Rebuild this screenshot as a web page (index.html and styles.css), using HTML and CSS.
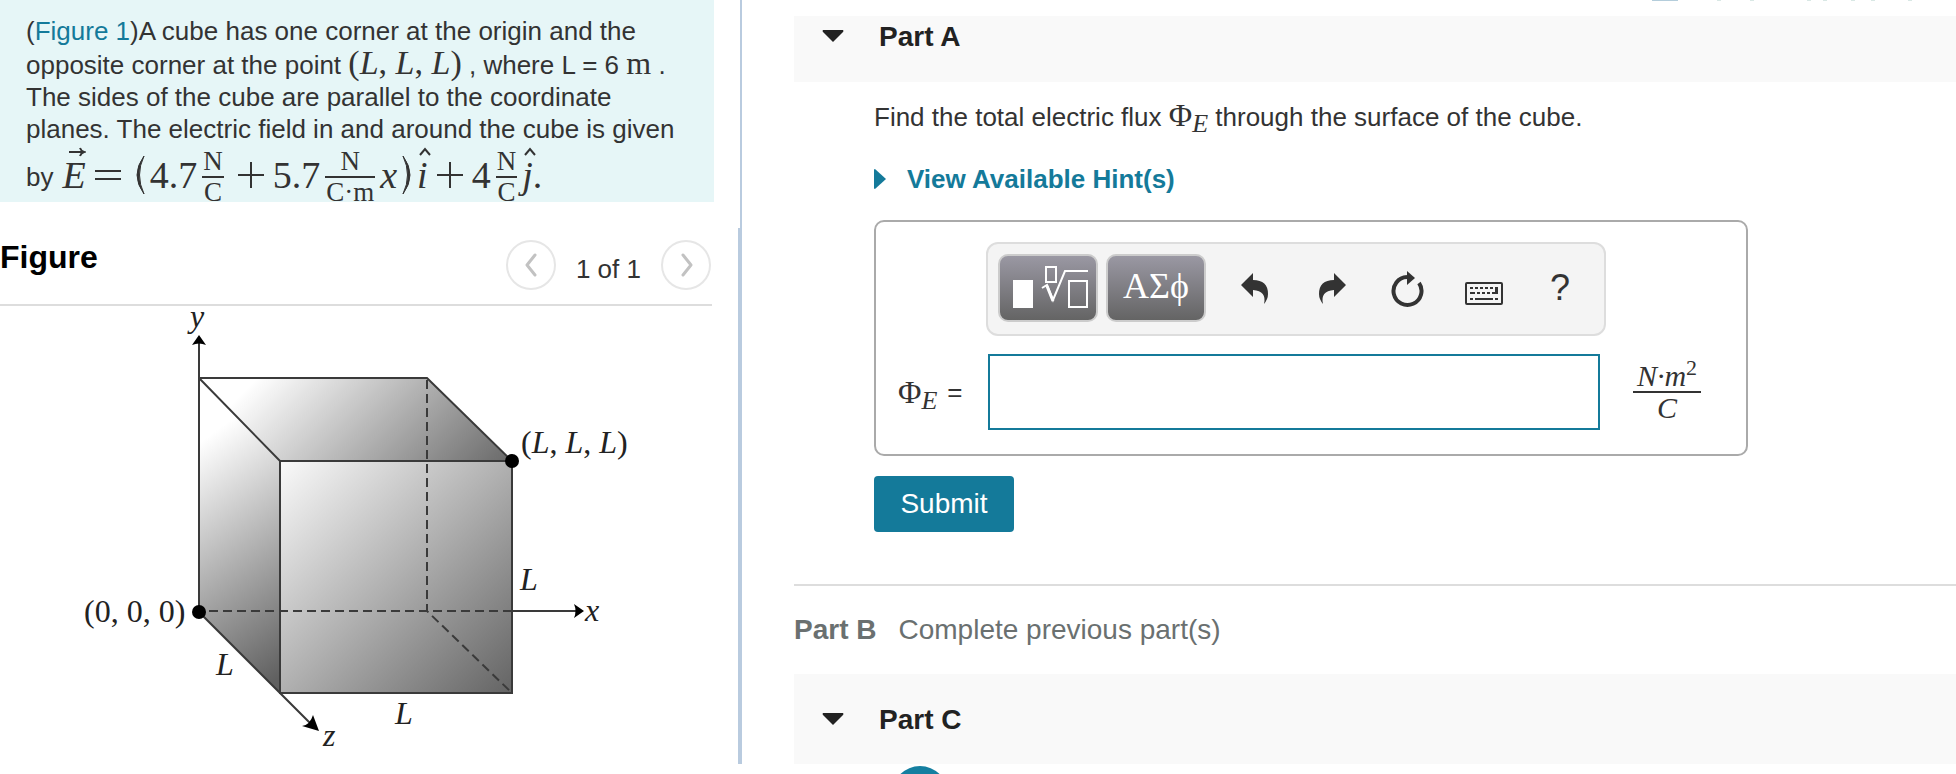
FILE: index.html
```html
<!DOCTYPE html>
<html lang="en">
<head>
<meta charset="utf-8">
<title>Electric flux through a cube</title>
<link rel="stylesheet" href="styles.css">
</head>
<body>
<main class="page">
  <section class="side">
    <p class="problem">
      (<a href="#figure">Figure 1</a>)A cube has one corner at the origin and the<br>
      opposite corner at the point <span class="math point">(<i>L</i>, <i>L</i>, <i>L</i>)</span> , where L = 6 <span class="math unit-m">m</span> .<br>
      The sides of the cube are parallel to the coordinate<br>
      planes. The electric field in and around the cube is given<br>
      <span class="equation"><span class="by">by</span>
        <span class="math"><span class="accented"><i>E</i><svg class="accent" viewBox="0 0 18 10" width="18" height="10"><path d="M1 5H16M12 1q1 3 4 4q-3 1-4 4" fill="none" stroke="currentColor" stroke-width="2"/></svg></span></span>
        <svg class="op" viewBox="0 0 26 26" width="26" height="26"><path d="M0 9H26M0 17H26" stroke="currentColor" stroke-width="2"/></svg>
        <svg class="paren" viewBox="0 0 10 40" width="10" height="40"><path d="M9 1Q-5 20 9 39Q0 20 9 1z" fill="currentColor" stroke="currentColor"/></svg>
        <span class="math">4.7</span>
        <span class="frac"><span>N</span><span>C</span></span>
        <svg class="op" viewBox="0 0 26 26" width="26" height="26"><path d="M0 13H26M13 0V26" stroke="currentColor" stroke-width="2"/></svg>
        <span class="math">5.7</span>
        <span class="frac"><span>N</span><span>C·m</span></span>
        <span class="math"><i>x</i></span>
        <svg class="paren" viewBox="0 0 10 40" width="10" height="40"><path d="M1 1Q15 20 1 39Q10 20 1 1z" fill="currentColor" stroke="currentColor"/></svg>
        <span class="math"><span class="accented"><i>i</i><svg class="accent" viewBox="0 0 18 10" width="18" height="10"><path d="M4 8L9 2L14 8" fill="none" stroke="currentColor" stroke-width="2"/></svg></span></span>
        <svg class="op" viewBox="0 0 26 26" width="26" height="26"><path d="M0 13H26M13 0V26" stroke="currentColor" stroke-width="2"/></svg>
        <span class="math">4</span>
        <span class="frac"><span>N</span><span>C</span></span>
        <span class="math"><span class="accented"><i>j</i><svg class="accent" viewBox="0 0 18 10" width="18" height="10"><path d="M4 8L9 2L14 8" fill="none" stroke="currentColor" stroke-width="2"/></svg></span>.</span>
      </span>
    </p>
    <div class="figure-area">
      <header class="figure-head">
        <h2>Figure</h2>
        <nav class="pager" aria-label="Figures">
          <button type="button" aria-label="Previous figure"><svg viewBox="0 0 50 50" width="50" height="50"><path d="M29 15L21 25L29 35" fill="none" stroke="#c2c2c2" stroke-width="3" stroke-linecap="round" stroke-linejoin="round"/></svg></button>
          <span>1 of 1</span>
          <button type="button" aria-label="Next figure"><svg viewBox="0 0 50 50" width="50" height="50"><path d="M22 15L30 25L22 35" fill="none" stroke="#c2c2c2" stroke-width="3" stroke-linecap="round" stroke-linejoin="round"/></svg></button>
        </nav>
      </header>
      <svg class="cube" id="figure" viewBox="0 306 712 458" role="img" aria-label="Cube with one corner at the origin">
        <defs>
          <linearGradient id="top" gradientUnits="userSpaceOnUse" x1="270" y1="365" x2="440" y2="535"><stop offset="0" stop-color="#fff"/><stop offset="1" stop-color="#686868"/></linearGradient>
          <linearGradient id="left" gradientUnits="userSpaceOnUse" x1="190" y1="450" x2="330" y2="640"><stop offset="0" stop-color="#fff"/><stop offset="1" stop-color="#606060"/></linearGradient>
          <linearGradient id="front" gradientUnits="userSpaceOnUse" x1="280" y1="461" x2="512" y2="693"><stop offset="0" stop-color="#fafafa"/><stop offset=".5" stop-color="#b0b0b0"/><stop offset="1" stop-color="#646464"/></linearGradient>
        </defs>
        <path d="M199 378H427L512 461H280z" fill="url(#top)"/>
        <path d="M199 378L280 461V693L199 612z" fill="url(#left)"/>
        <path d="M280 461H512V693H280z" fill="url(#front)"/>
        <g fill="none" stroke="#3a3a3a" stroke-width="2">
          <path d="M199 342V612L312 725M199 378H427L512 461M199 378L280 461H512V693H280V461M512 611H576"/>
          <path d="M427 380V611L512 693M209 611H512" stroke-dasharray="9 5"/>
        </g>
        <g>
          <path d="M199 335L206 345Q199 342 192 345z"/>
          <path d="M584 611L574 604Q577 611 574 618z"/>
          <path d="M319 731L302 726Q310 725 313 715z"/>
          <circle cx="199" cy="612" r="7"/><circle cx="512" cy="461" r="7"/>
        </g>
        <g class="labels">
          <text x="190" y="327" class="it">y</text>
          <text x="84" y="622">(0, 0, 0)</text>
          <text x="521" y="453">(<tspan class="it">L</tspan>, <tspan class="it">L</tspan>, <tspan class="it">L</tspan>)</text>
          <text x="520" y="590" class="it">L</text>
          <text x="216" y="675" class="it">L</text>
          <text x="395" y="724" class="it">L</text>
          <text x="585" y="621" class="it">x</text>
          <text x="323" y="746" class="it">z</text>
        </g>
      </svg>
    </div>
  </section>

  <section class="parts">
    <div class="cutoff"><svg viewBox="0 0 304 1" width="304" height="1"><path d="M0 0h26v1H0z" fill="#b4cddb"/><path d="M65 0h4v1h-4zM98 0h4v1h-4zM155 0h4v1h-4zM171 0h4v1h-4zM199 0h4v1h-4zM219 0h4v1h-4zM256 0h4v1h-4z" fill="#d9e8e5"/></svg></div>
    <header class="part-head part-a">
      <svg viewBox="0 0 22 12" width="22" height="12"><path d="M1 0H21Q22 1 21 2L11 12L1 2Q0 1 1 0z" fill="#222"/></svg>
      <h2>Part A</h2>
    </header>
    <div class="part-body">
      <p class="question">Find the total electric flux <span class="phi">Φ<sub>E</sub></span> through the surface of the cube.</p>
      <a class="hints" href="#hints"><svg viewBox="0 0 12 20" width="12" height="20"><path d="M0 1Q0 0 1 0L12 10L1 20Q0 20 0 19z" fill="#147a9a"/></svg>View Available Hint(s)</a>
      <form class="answer" id="answer">
        <div class="toolbar">
          <button type="button" class="pad" aria-label="Templates"><svg viewBox="0 0 96 64" width="96" height="64"><path d="M13 24h20v28H13z" fill="#fff"/><path d="M46 11h10v15H46zM69 25h18v26H69z" fill="none" stroke="#fff" stroke-width="2"/><path d="M42 32l5-3l6 15L65 15H88" fill="none" stroke="#fff" stroke-width="2"/><path d="M47 30l6 15" stroke="#fff" stroke-width="3"/></svg></button>
          <button type="button" class="pad">ΑΣϕ</button>
          <button type="button" class="tool" aria-label="Undo"><svg viewBox="0 0 40 40" width="40" height="40"><path d="M5 17L17 5V12Q32 12 32 26Q32 31 28 36Q31 23 17 22V29z" fill="#333"/></svg></button>
          <button type="button" class="tool" aria-label="Redo"><svg viewBox="0 0 40 40" width="40" height="40"><path d="M34 17L22 5V12Q7 12 7 26Q7 31 11 36Q8 23 22 22V29z" fill="#333"/></svg></button>
          <button type="button" class="tool" aria-label="Reset"><svg viewBox="0 0 40 40" width="40" height="40"><path d="M31 15A14 14 0 1 1 19 9" fill="none" stroke="#333" stroke-width="4"/><path d="M19 3L27 10L19 17z" fill="#333"/></svg></button>
          <button type="button" class="tool" aria-label="Keyboard"><svg viewBox="0 0 40 40" width="40" height="40"><rect x="2" y="15" width="36" height="21" rx="1" fill="none" stroke="#333" stroke-width="2"/><g fill="#333"><path d="M6 19h3v2H6zM11 19h3v2h-3zM16 19h3v2h-3zM21 19h3v2h-3zM26 19h3v2h-3z"/><path d="M6 24h5v2H6zM13 24h3v2h-3zM18 24h3v2h-3zM23 24h3v2h-3zM28 24h3v-5h3v7h-6z"/><path d="M6 30h3v2H6zM11 30h18v2H11zM31 30h3v2h-3z"/></g></svg></button>
          <button type="button" class="tool help" aria-label="Help">?</button>
        </div>
        <label class="flux-label" for="flux"><span class="phi">Φ<sub>E</sub></span><span>=</span></label>
        <input id="flux" type="text" autocomplete="off">
        <span class="flux-unit"><span>N·m<sup>2</sup></span><span>C</span></span>
      </form>
      <button class="submit" type="submit" form="answer">Submit</button>
    </div>
    <div class="part-b"><b>Part B</b><span>Complete previous part(s)</span></div>
    <header class="part-head part-c">
      <svg viewBox="0 0 22 12" width="22" height="12"><path d="M1 0H21Q22 1 21 2L11 12L1 2Q0 1 1 0z" fill="#222"/></svg>
      <h2>Part C</h2>
    </header>
    <div class="part-c-body"><div class="dot"></div></div>
  </section>
</main>
</body>
</html>
```

FILE: styles.css
```css
* { box-sizing: border-box; }
body {
  margin: 0;
  background: #fff;
  color: #333;
  font: 26px/32px "Liberation Sans", Arial, sans-serif;
}
h2, p { margin: 0; }
a { color: #147a9a; text-decoration: none; }
button { font: inherit; padding: 0; cursor: pointer; }
svg { display: block; flex: none; }

.page { display: grid; grid-template-columns: 742fr 1214fr; align-items: start; }

/* Left column */
.side { border-right: 2px solid #b9cbdf; }
.problem {
  height: 202px;
  margin-right: 26px;
  padding: 15px 0 0 26px;
  overflow: hidden;
  background: #e6f6f7;
  white-space: nowrap;
}
.math, .frac, .labels, .phi, .flux-unit { font-family: "Liberation Serif", "Times New Roman", serif; }
.problem .point { font-size: 34px; }
.unit-m { font-size: 32px; }
.equation { display: flex; align-items: center; height: 60px; }
.equation .math { font-size: 38px; }
.by { margin-right: 9px; padding-top: 3px; }
.op { margin: 0 9px; }
.paren { margin: 0 5px; }
.accented { position: relative; }
.accent { position: absolute; left: 50%; top: -7px; margin-left: -6px; }
.frac { display: flex; flex-direction: column; text-align: center; font-size: 27px; line-height: 29px; margin: 4px 5px 0; }
.frac span:first-child { border-bottom: 2px solid #333; }
.frac span { padding: 0 1px; }

.figure-area { margin-top: 26px; border-right: 2px solid #b9cbdf; }
.figure-head {
  display: flex;
  justify-content: space-between;
  height: 78px;
  margin-right: 26px;
  padding: 12px 1px 0 0;
  border-bottom: 2px solid #ddd;
}
.figure-head h2 { font-size: 32px; line-height: 34px; color: #000; }
.pager { display: flex; gap: 20px; }
.pager span { padding-top: 13px; }
.pager button { width: 50px; height: 50px; border: 2px solid #e6e6e6; border-radius: 50%; background: #fff; display: grid; place-items: center; place-content: center; }
.cube { width: calc(100% - 26px); height: auto; }
.labels { font-size: 32px; fill: #222; }
.it { font-style: italic; }

/* Right column */
.parts { padding-left: 52px; }
.cutoff { display: flex; justify-content: flex-end; height: 16px; }
.part-head { display: flex; align-items: center; gap: 35px; padding-left: 28px; background: #f9f9f9; color: #222; }
.part-head h2 { padding-top: 2px; font-size: 28px; line-height: 32px; }
.part-a { padding-bottom: 26px; height: 66px; }
.part-c { height: 90px; }
.part-body { padding: 17px 0 52px 80px; }
.question { line-height: 36px; }
.phi { font-size: 32px; line-height: 0; }
.phi sub { font-size: 26px; font-style: italic; line-height: 0; vertical-align: -6px; }
.hints { display: flex; align-items: center; gap: 21px; width: max-content; margin-top: 28px; font-weight: bold; }
.answer {
  display: grid;
  grid-template-columns: 90px 612fr 134px;
  align-items: center;
  row-gap: 18px;
  max-width: 874px;
  margin-top: 25px;
  padding: 20px 12px 24px 22px;
  border: 2px solid #aaa;
  border-radius: 10px;
}
.toolbar {
  grid-column: 2 / 4;
  display: flex;
  align-items: center;
  width: 620px;
  height: 94px;
  margin-left: -2px;
  padding: 0 6px 2px 10px;
  border: 2px solid #ddd;
  border-radius: 12px;
  background: #f4f4f4;
}
.pad {
  display: grid;
  place-items: center;
  place-content: center;
  width: 100px;
  height: 68px;
  margin-right: 8px;
  border: 2px solid #ccc;
  border-radius: 10px;
  background: linear-gradient(#9a98a3, #646464);
  color: #fff;
  font: 36px/40px "Liberation Serif", "Times New Roman", serif;
}
.pad + .pad { margin-right: 12px; padding-bottom: 4px; }
.tool { display: grid; flex: 1; place-items: center; height: 68px; border: 0; background: none; color: #333; }
.help { font-size: 36px; }
.flux-label { display: flex; align-items: center; gap: 10px; line-height: 32px; }
.flux-label .phi { line-height: 32px; }
.answer input { width: 100%; height: 76px; border: 2px solid #147a9a; background: #fff; font: inherit; padding: 0 12px; }
.flux-unit { justify-self: center; text-align: center; font-size: 30px; line-height: 30px; font-style: italic; }
.flux-unit span { display: block; padding: 0 4px; }
.flux-unit span:first-child { border-bottom: 2px solid #333; }
.flux-unit sup { font-size: 22px; font-style: normal; line-height: 0; }
.submit { width: 140px; height: 56px; margin-top: 20px; border: 0; border-radius: 4px; background: #147a9a; color: #fff; font-size: 28px; display: block; }
.part-b { display: flex; gap: 22px; height: 90px; padding-top: 28px; border-top: 2px solid #ddd; color: #6a7070; font-size: 28px; }
.part-c-body { height: 10px; padding: 2px 0 0 98px; overflow: hidden; }
.dot { width: 56px; height: 56px; border-radius: 50%; background: #147fa0; }
```
